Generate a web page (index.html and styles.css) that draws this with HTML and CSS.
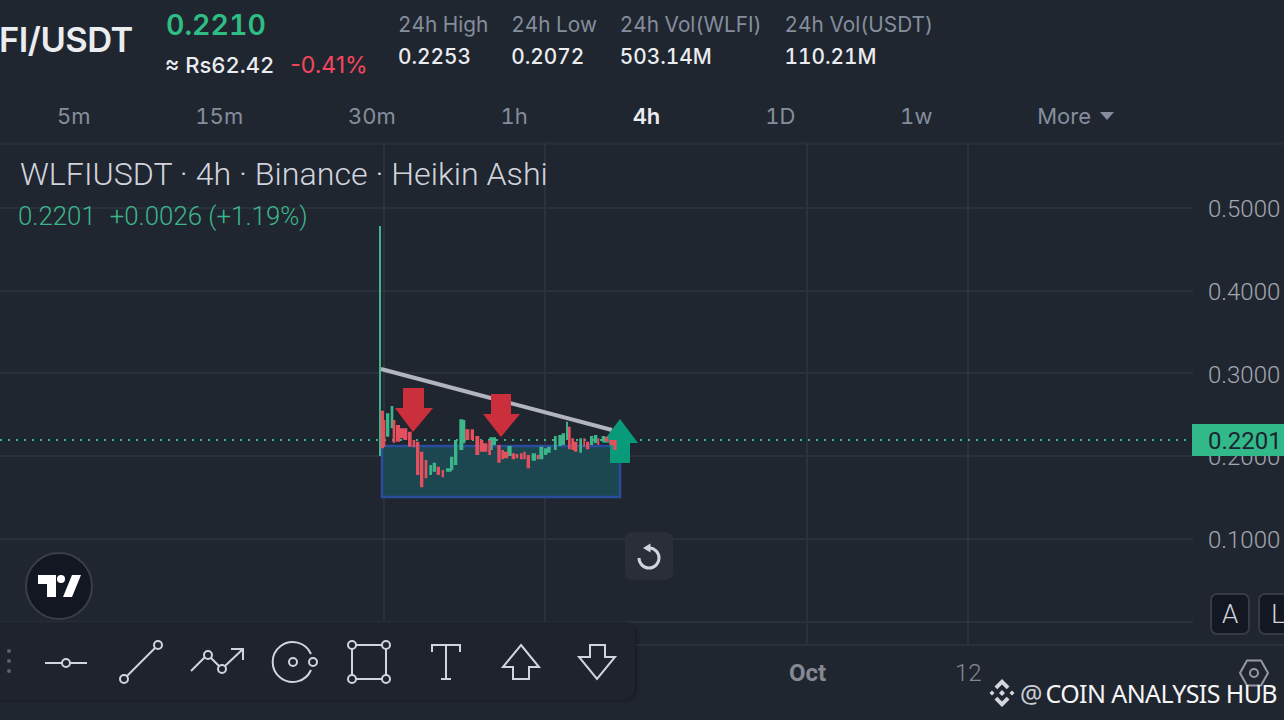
FILE: index.html
```html
<!DOCTYPE html>
<html lang="en">
<head>
    <meta charset="UTF-8">
    <meta name="viewport" content="width=device-width, initial-scale=1.0">
    <title>WLFI/USDT chart</title>
    <link rel="stylesheet" href="styles.css">
</head>
<body>

<header class="ticker">
    <h1 class="pair">FI/USDT</h1>
    <div class="last">
        <div class="last-price">0.2210</div>
        <div class="last-sub">
            <span class="fiat">≈ Rs62.42</span>
            <span class="change">-0.41%</span>
        </div>
    </div>
    <div class="stats">
        <div class="stat"><span class="stat-label">24h High</span><span class="stat-value">0.2253</span></div>
        <div class="stat"><span class="stat-label">24h Low</span><span class="stat-value">0.2072</span></div>
        <div class="stat"><span class="stat-label">24h Vol(WLFI)</span><span class="stat-value">503.14M</span></div>
        <div class="stat"><span class="stat-label">24h Vol(USDT)</span><span class="stat-value">110.21M</span></div>
    </div>
</header>

<nav class="tabs">
    <span class="tab">5m</span>
    <span class="tab">15m</span>
    <span class="tab">30m</span>
    <span class="tab">1h</span>
    <span class="tab active">4h</span>
    <span class="tab">1D</span>
    <span class="tab">1w</span>
    <span class="tab more">More <i class="caret"></i></span>
</nav>

<main class="chart">
    <!-- viewBox keeps page coordinates so the drawing numbers read like the screenshot -->
    <svg class="plot" viewBox="0 142 1284 578" width="1284" height="578">
        <g class="grid">
            <path d="M0 208H1193M0 291H1193M0 373H1193M0 456H1193M0 539H1193M0 622H1193"/>
            <path d="M384 142V645M545 142V645M807 142V645M968 142V645"/>
            <path d="M0 645H1284"/>
        </g>
        <rect class="zone" x="382" y="446" width="238" height="51"/>
        <path class="spike" d="M379 226h2v230h-2z"/>
        <line class="trend" x1="381" y1="369" x2="612" y2="430"/>
        <line class="last-line" x1="0" y1="440" x2="1192" y2="440"/>
        <path class="arrow-green" d="M620 419l18 24h-8v20h-20v-20h-8z"/>
        <!-- candles, drawn at 3x of the page -->
        <g transform="translate(340 360) scale(.3333)">
            <path class="up" d="M138 160h10v70h-10zM152 138h8v67h-8zM268 315h8v30h-8zM278 308h10v27h-10zM318 325h17v10h-17zM330 290h10v40h-10zM342 240h10v75h-10zM358 178h12v92h-12zM370 180h6v70h-6zM448 232h10v38h-10zM458 232h10v23h-10zM502 258h13v30h-13zM575 280h13v22h-13zM598 260h12v38h-12zM612 265h10v20h-10zM622 260h10v18h-10zM642 228h8v42h-8zM655 225h10v33h-10zM665 220h10v35h-10zM678 185h6v55h-6zM718 235h8v43h-8zM750 228h10v27h-10zM762 225h10v25h-10zM785 228h10v17h-10z"/>
            <path class="down" d="M122 152h10v113h-10zM130 180h6v80h-6zM158 180h8v68h-8zM168 195h12v50h-12zM180 205h10v30h-10zM190 205h12v35h-12zM204 215h11v45h-11zM218 240h8v22h-8zM228 245h10v100h-10zM240 275h10v107h-10zM254 300h8v55h-8zM290 320h10v25h-10zM305 330h7v22h-7zM376 208h12v32h-12zM392 208h10v32h-10zM406 228h12v57h-12zM420 240h10v35h-10zM430 250h12v25h-12zM445 240h8v45h-8zM472 255h10v53h-10zM484 270h8v28h-8zM492 275h13v20h-13zM515 280h10v18h-10zM527 282h8v13h-8zM540 280h8v18h-8zM550 275h7v23h-7zM560 285h10v40h-10zM590 285h8v13h-8zM684 200h8v68h-8zM694 235h8v35h-8zM702 245h10v30h-10zM730 235h5v25h-5zM738 245h10v23h-10zM772 235h6v20h-6zM795 230h10v15h-10zM808 240h12v15h-12zM820 240h10v30h-10z"/>
        </g>
        <path class="arrow-red" d="M403 388h21v20h9l-20 24l-18-24h8zM491 394h20v20h9l-19 23l-18-23h8z"/>
    </svg>

    <div class="legend">
        <div class="legend-title">WLFIUSDT · 4h · Binance · Heikin Ashi</div>
        <div class="legend-values"><span>0.2201</span><span>+0.0026 (+1.19%)</span></div>
    </div>

    <div class="price-axis">
        <span>0.5000</span>
        <span>0.4000</span>
        <span>0.3000</span>
        <span>0.2000</span>
        <span>0.1000</span>
    </div>
    <div class="price-tag">0.2201</div>

    <div class="time-label oct">Oct</div>
    <div class="time-label twelve">12</div>

    <div class="tv-logo">
        <svg viewBox="0 0 44 22" width="44" height="22">
            <path d="M0 0h18v22h-9v-13h-9z"/>
            <circle cx="23" cy="4" r="4"/>
            <path d="M34 0h9l-9 22h-9z"/>
        </svg>
    </div>

    <button class="reset-btn">
        <svg viewBox="0 0 28 28" width="28" height="28">
            <path d="M14 6a10 10 0 1 1-10 10" fill="none" stroke="#d1d4dc" stroke-width="3"/>
            <path d="M8 6l7.500-4.500v9z" fill="#d1d4dc"/>
        </svg>
    </button>

    <div class="scale-btn scale-a">A</div>
    <div class="scale-btn scale-l">L</div>

    <svg class="settings" viewBox="0 0 32 32" width="32" height="32">
        <path d="M9 3.500h14l7 12.500l-7 12.500h-14l-7-12.500z"/>
        <circle cx="16" cy="16" r="4"/>
    </svg>

    <div class="toolbar">
        <div class="grip"><i></i><i></i><i></i></div>
        <svg class="tool-icons" viewBox="0 622 635 78" width="635" height="78">
            <path d="M45 663h17M70 663h17"/>
            <circle cx="66" cy="663" r="4"/>
            <path d="M127 676l28-28"/>
            <circle cx="124" cy="679" r="4"/>
            <circle cx="158" cy="645" r="4"/>
            <path d="M191 671l14-14M211 658l8 8M225 666l18-17M231 649h12v11"/>
            <circle cx="208" cy="655" r="4"/>
            <circle cx="222" cy="669" r="4"/>
            <path d="M311 654a20 20 0 1 0 0 16"/>
            <circle cx="293" cy="662" r="4"/>
            <circle cx="313" cy="662" r="4"/>
            <path d="M356 645h26M386 649v26M382 679h-26M352 675v-26"/>
            <circle cx="352" cy="645" r="4"/>
            <circle cx="386" cy="645" r="4"/>
            <circle cx="352" cy="679" r="4"/>
            <circle cx="386" cy="679" r="4"/>
            <path d="M432 652v-7h28v7M446 645v34M441 679h10"/>
            <path d="M521 645l18 22h-10v12h-16v-12h-10z"/>
            <path d="M590 645h15v12h10l-18 22l-18-22h11z"/>
        </svg>
    </div>

    <div class="watermark">
        <svg viewBox="0 0 28 28" width="28" height="28">
            <path d="M14 0l7.500 7.500l-2.800 2.800l-4.700-4.700l-4.700 4.700l-2.800-2.800zM14 28l7.500-7.500l-2.800-2.800l-4.700 4.700l-4.700-4.700l-2.800 2.800zM14 11l3 3l-3 3l-3-3zM4 11.500l2.500 2.500l-2.500 2.500l-2.500-2.500zM24 11.500l2.500 2.500l-2.500 2.500l-2.500-2.500z"/>
        </svg>
        <span class="at">@</span>
        <span class="hub">COIN ANALYSIS HUB</span>
    </div>
</main>

</body>
</html>
```

FILE: styles.css
```css
html, body {
    margin: 0;
    padding: 0;
}
body {
    width: 1284px;
    height: 720px;
    overflow: hidden;
    background-color: #202630;
    font-family: "Noto Sans", Inter, sans-serif;
    color: #eaecef;
}

/* top ticker */
.ticker {
    display: flex;
    height: 92px;
    box-sizing: border-box;
    font-variant-numeric: tabular-nums;
}
.pair {
    margin: 18px 0 0 -1px;
    width: 167px;
    font-family: Inter, sans-serif;
    font-size: 34.5px;
    font-weight: 600;
    line-height: 44px;
    letter-spacing: -0.5px;
    color: #eaecef;
}
.last {
    width: 232px;
    padding-top: 8px;
}
.last-price {
    font-family: Inter, sans-serif;
    font-size: 28.5px;
    font-weight: 600;
    line-height: 34px;
    color: #2ebd85;
}
.last-sub {
    display: flex;
    gap: 16px;
    margin: 6px 0 0 -1px;
    font-family: Inter, sans-serif;
    font-size: 22px;
    line-height: 34px;
}
.fiat {
    font-weight: 500;
}
.change {
    font-size: 23px;
    font-variant-numeric: normal;
    color: #f6465d;
}
.stats {
    display: flex;
    gap: 22.8px;
    padding-top: 13px;
    font-family: Inter, sans-serif;
    font-size: 20.8px;
}
.stat {
    display: flex;
    flex-direction: column;
    gap: 8px;
    line-height: 24px;
}
.stat-label {
    color: #848e9c;
}
.stat-value {
    font-weight: 500;
}

/* interval tabs */
.tabs {
    display: flex;
    align-items: center;
    gap: 104.8px;
    height: 48px;
    padding: 0 0 2px 57px;
    font-family: Inter, sans-serif;
    font-size: 22px;
    font-variant-numeric: tabular-nums;
    color: #848e9c;
}
.tab.active {
    color: #eaecef;
    font-weight: 600;
}
.caret {
    display: inline-block;
    width: 0;
    height: 0;
    margin-left: 3px;
    vertical-align: 4px;
    border-left: 7px solid transparent;
    border-right: 7px solid transparent;
    border-top: 8px solid #848e9c;
}

/* chart */
.chart {
    position: relative;
    height: 578px;
}
.chart::before {
    content: "";
    position: absolute;
    top: 0;
    left: 0;
    right: 0;
    height: 3px;
    background-color: #272d38;
}
.plot {
    position: absolute;
    top: 0;
    left: 0;
}
.grid path {
    fill: none;
    stroke: #2b313c;
    stroke-width: 2;
}
.zone {
    fill: #1c4751;
    stroke: #2a4c9c;
    stroke-width: 2.5;
}
.spike, .up {
    fill: #3db58a;
}
.down {
    fill: #e5505f;
}
.trend {
    stroke: #b2b5be;
    stroke-width: 4;
}
.last-line {
    stroke: #3db58a;
    stroke-width: 2;
    stroke-dasharray: 2 6;
}
.arrow-red {
    fill: #cc2f3c;
}
.arrow-green {
    fill: #089b7a;
}

.legend {
    position: absolute;
    top: 12px;
    left: 20px;
    font-family: Roboto, sans-serif;
    font-weight: 300;
}
.legend-title {
    font-size: 32.2px;
    line-height: 40px;
    color: #d1d4dc;
}
.legend-values {
    display: flex;
    gap: 14px;
    margin: 2px 0 0 -2px;
    font-size: 25.8px;
    line-height: 40px;
    color: #3db58a;
}

.price-axis {
    position: absolute;
    top: 26px;
    left: 1208px;
    display: flex;
    flex-direction: column;
    font-family: Roboto, sans-serif;
    font-weight: 300;
    font-size: 24px;
    color: #a3a6af;
}
.price-axis span {
    height: 82.75px;
    line-height: 82.75px;
}
.price-tag {
    position: absolute;
    top: 282px;
    left: 1192px;
    width: 92px;
    height: 32px;
    box-sizing: border-box;
    padding-left: 16px;
    background-color: #32b98a;
    color: #1c2430;
    font-family: Roboto, sans-serif;
    font-size: 24px;
    line-height: 34px;
}
.time-label {
    position: absolute;
    top: 515px;
    font-family: Roboto, sans-serif;
    font-size: 24px;
    line-height: 32px;
    color: #868993;
}
.oct {
    left: 789px;
    font-weight: 700;
}
.twelve {
    left: 955px;
    font-weight: 300;
}

.tv-logo {
    position: absolute;
    top: 410px;
    left: 25px;
    display: flex;
    align-items: center;
    justify-content: center;
    width: 68px;
    height: 68px;
    box-sizing: border-box;
    padding: 0 0 0 2px;
    border: 2px solid #3a3e4a;
    border-radius: 50%;
    background-color: #131722;
}
.tv-logo svg {
    fill: #fff;
}

.reset-btn {
    position: absolute;
    top: 390px;
    left: 625px;
    display: flex;
    align-items: center;
    justify-content: center;
    width: 48px;
    height: 48px;
    padding: 0;
    border: none;
    border-radius: 7px;
    background-color: #2a2e39;
}

.scale-btn {
    position: absolute;
    top: 451px;
    width: 40px;
    height: 42px;
    box-sizing: border-box;
    border: 2px solid #363a45;
    border-radius: 7px;
    background-color: #131722;
    font-family: Roboto, sans-serif;
    font-weight: 300;
    font-size: 26px;
    line-height: 38px;
    text-align: center;
    color: #d1d4dc;
}
.scale-a {
    left: 1210px;
}
.scale-l {
    left: 1258px;
}

.settings {
    position: absolute;
    top: 515px;
    left: 1238px;
}
.settings path, .settings circle {
    fill: none;
    stroke: #9598a1;
    stroke-width: 2;
}

.toolbar {
    position: absolute;
    top: 480px;
    left: 0;
    width: 635px;
    height: 78px;
    border-radius: 0 12px 12px 0;
    background-color: #1e232e;
    box-shadow: 2px 1px 3px rgba(15, 18, 26, 0.5);
}
.grip {
    position: absolute;
    top: 27px;
    left: 7px;
    display: flex;
    flex-direction: column;
    gap: 6px;
}
.grip i {
    width: 4px;
    height: 4px;
    border-radius: 50%;
    background-color: #5d606b;
}
.tool-icons {
    display: block;
}
.tool-icons path, .tool-icons circle {
    fill: none;
    stroke: #d1d4dc;
    stroke-width: 2;
}

.watermark {
    position: absolute;
    top: 532px;
    left: 988px;
    display: flex;
    align-items: center;
    height: 38px;
    white-space: nowrap;
    font-family: "Noto Sans", sans-serif;
    font-size: 25px;
    color: #f5f5f5;
}
.watermark svg {
    fill: #d5d7de;
}
.at {
    margin: 0 3px 0 4px;
    color: #c9ccd3;
}
.hub {
    letter-spacing: -0.6px;
}
```
